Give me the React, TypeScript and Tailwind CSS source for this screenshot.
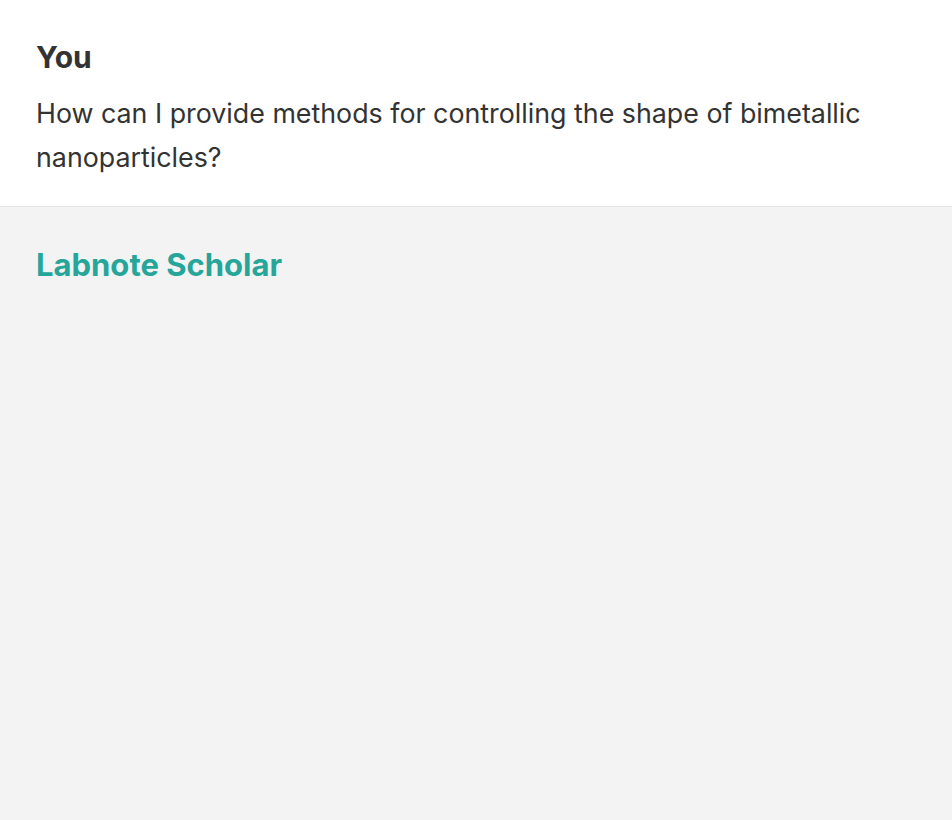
export default function App() {
  return (
    <div
      className="min-h-[820px] w-full bg-[#f3f3f3] text-[#333333]"
      style={{ fontFamily: "Inter, 'Noto Sans', sans-serif" }}
    >
      {/* USER MESSAGE */}
      <div className="bg-white border-b border-[#e5e5e5] px-9 pt-[38px] pb-[27px]">
        <div className="text-[30px] font-bold leading-[38px]">You</div>
        <p className="mt-[15px] text-[26.8px] leading-[44px]">
          How can I provide methods for controlling the shape of bimetallic nanoparticles?
        </p>
      </div>

      {/* ASSISTANT */}
      <div className="px-9 pt-[39px]">
        <div className="text-[31px] font-bold leading-[38px] text-[#26a69a]">
          Labnote Scholar
        </div>
      </div>
    </div>
  );
}
